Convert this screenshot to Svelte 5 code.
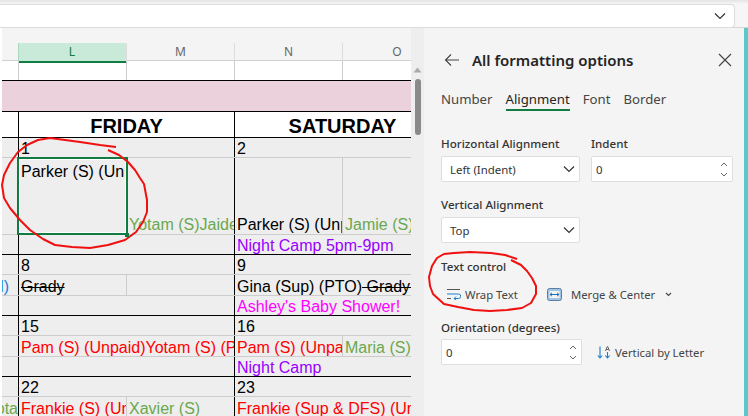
<script>
  // one entry per sheet row, cells are K L M N O (span merges)
  const rows = [
    { h: 20, line: true, cells: [{}, {}, {}, {}, {}], white: true, thin: true },
    { h: 31, line: true, pink: true, cells: [{ span: 5 }] },
    { h: 26, line: true, white: true, cells: [{}, { t: "FRIDAY", span: 2, c: "day" }, { t: "SATURDAY", span: 2, c: "day" }] },
    { h: 20, cells: [{}, { t: "1", span: 2 }, { t: "2", span: 2 }] },
    { h: 77, cells: [{}, { t: "Parker (S) (Unpaid)", c: "top sel" }, { t: "Yotam (S)Jaiden", c: "green end b" }, { t: "Parker (S) (Unpaid)", c: "end" }, { t: "Jamie (S)", c: "green end" }] },
    { h: 20, line: true, cells: [{}, { span: 2 }, { t: "Night Camp 5pm-9pm", span: 2, c: "purple" }] },
    { h: 20, cells: [{}, { t: "8", span: 2 }, { t: "9", span: 2 }] },
    { h: 21, cells: [{ t: "(Unpaid)", c: "blue flip gap" }, { t: "Grady", c: "strike" }, { c: "b" }, { t: "Gina (Sup) (PTO)", span: 2, grady: true }] },
    { h: 20, line: true, cells: [{}, { span: 2 }, { t: "Ashley's Baby Shower!", span: 2, c: "pink" }] },
    { h: 20, cells: [{}, { t: "15", span: 2 }, { t: "16", span: 2 }] },
    { h: 21, cells: [{}, { t: "Pam (S) (Unpaid)Yotam (S) (PTO)", span: 2, c: "red" }, { t: "Pam (S) (Unpaid)", c: "red" }, { t: "Maria (S)", c: "green" }] },
    { h: 20, line: true, cells: [{}, { span: 2 }, { t: "Night Camp", span: 2, c: "purple" }] },
    { h: 20, cells: [{}, { t: "22", span: 2 }, { t: "23", span: 2 }] },
    { h: 21, cells: [{ t: "Yota", c: "green flip" }, { t: "Frankie (S) (Unpaid)", c: "red" }, { t: "Xavier (S)", c: "green b" }, { t: "Frankie (Sup & DFS) (Unpaid)", span: 2, c: "red" }] }
  ];
  const cols = [
    { l: "" },
    { l: "L", on: true },
    { l: "M" },
    { l: "N" },
    { l: "O" }
  ];
  const tabs = ["Number", "Alignment", "Font", "Border"];
</script>

<div class="app">
  <div class="formula">
    <div class="fbox">
      <svg width="12" height="8" viewBox="0 0 12 8"><path d="M1 1.5 6 6.5 11 1.5" fill="none" stroke="#333" stroke-width="1.2" /></svg>
    </div>
  </div>

  <div class="main">
    <div class="sheetwrap">
      <div class="sheet">
        <div class="colhead">
          {#each cols as col}
            <div class="col" class:on={col.on}>{col.l}</div>
          {/each}
        </div>
        {#each rows as row}
          <div class="row" class:line={row.line} class:white={row.white} class:thin={row.thin} class:pinkrow={row.pink} style="height:{row.h}px">
            {#each row.cells as cell}
              <div class="cell {cell.c ?? ''}" class:s2={cell.span === 2} class:s5={cell.span === 5}>
                <span>{cell.t ?? ""}{#if cell.grady}<s>{" Grady "}</s>{/if}</span>
              </div>
            {/each}
          </div>
        {/each}
      </div>
      <div class="scroll">
        <svg width="9" height="6" viewBox="0 0 9 6"><path d="M0.5 5.5 4.5 0.5 8.5 5.5Z" fill="#aaa" /></svg>
        <div class="thumb"></div>
      </div>
    </div>

    <div class="panel">
      <div class="head">
        <svg width="16" height="14" viewBox="0 0 16 14"><path d="M15 7H1.5M7 1.5 1.5 7 7 12.5" fill="none" stroke="#444" stroke-width="1.1" /></svg>
        <h2>All formatting options</h2>
        <svg width="14" height="14" viewBox="0 0 14 14"><path d="M1 1 13 13M13 1 1 13" fill="none" stroke="#444" stroke-width="1.2" /></svg>
      </div>

      <div class="tabs">
        {#each tabs as tab}
          <div class="tab" class:active={tab === "Alignment"}>{tab}</div>
        {/each}
      </div>

      <div class="two">
        <div class="field w139">
          <label>Horizontal Alignment</label>
          <div class="box">Left (Indent)
            <svg width="12" height="8" viewBox="0 0 12 8"><path d="M1 1.5 6 6.5 11 1.5" fill="none" stroke="#333" stroke-width="1.2" /></svg>
          </div>
        </div>
        <div class="field w142">
          <label>Indent</label>
          <div class="box num">0
            <div class="spin">
              <svg width="8" height="5" viewBox="0 0 8 5"><path d="M1 4 4 1 7 4" fill="none" stroke="#666" /></svg>
              <svg width="8" height="5" viewBox="0 0 8 5"><path d="M1 1 4 4 7 1" fill="none" stroke="#666" /></svg>
            </div>
          </div>
        </div>
      </div>

      <div class="field w139 va">
        <label>Vertical Alignment</label>
        <div class="box">Top
          <svg width="12" height="8" viewBox="0 0 12 8"><path d="M1 1.5 6 6.5 11 1.5" fill="none" stroke="#333" stroke-width="1.2" /></svg>
        </div>
      </div>

      <label class="tc">Text control</label>
      <div class="actions">
        <div class="act wrap">
          <svg width="15" height="12" viewBox="0 0 15 12">
            <path d="M1 1.5H14M1 10.5H5" fill="none" stroke="#555" />
            <path d="M1 6H12.5A2 2 0 0 1 12.5 10.5H8M10 8.5 8 10.5 10 12" fill="none" stroke="#1b7fcf" />
          </svg>
          Wrap Text
        </div>
        <div class="act merge">
          <svg width="15" height="13" viewBox="0 0 15 13">
            <rect x="0.5" y="0.5" width="14" height="12" rx="2" fill="#9fc3e3" stroke="#5a7fa3" />
            <rect x="2.5" y="3" width="10" height="7" fill="#f4f4f4" />
            <path d="M3 6.5H12M5 4.8 3 6.5 5 8.2M10 4.8 12 6.5 10 8.2" fill="none" stroke="#1b6fb8" />
          </svg>
          Merge &amp; Center
          <svg class="mini" width="7" height="5" viewBox="0 0 7 5"><path d="M1 1 3.5 3.5 6 1" fill="none" stroke="#444" stroke-width="1.1" /></svg>
        </div>
      </div>

      <label class="ori">Orientation (degrees)</label>
      <div class="orirow">
        <div class="box num w142b">0
          <div class="spin">
            <svg width="8" height="5" viewBox="0 0 8 5"><path d="M1 4 4 1 7 4" fill="none" stroke="#666" /></svg>
            <svg width="8" height="5" viewBox="0 0 8 5"><path d="M1 1 4 4 7 1" fill="none" stroke="#666" /></svg>
          </div>
        </div>
        <div class="act vert">
          <svg width="14" height="13" viewBox="0 0 14 13">
            <path d="M3 0.5V12M0.8 9.5 3 12 5.2 9.5M10.5 6V12M8.3 9.5 10.5 12 12.7 9.5" fill="none" stroke="#1b7fcf" stroke-width="1.1" />
            <path d="M8.5 5 10.3 0.5H10.7L12.5 5M9.3 3.5H11.7" fill="none" stroke="#555" stroke-width="0.9" />
          </svg>
          Vertical by Letter
        </div>
      </div>
    </div>
    <div class="edge"></div>
  </div>

  <svg class="ink" width="748" height="416" viewBox="0 0 748 416">
    <path d="M116 147 100 145 80 142 65 140 50 138 38 140 27 145 18 152 10 163 4 175 2 185 4 198 10 208 20 220 30 230 43 239 55 245 72 247 90 248 108 245 125 240 136 232 143 222 147 212 147 200 144 184 140 178 135 170 128 162 119 155 108 150" fill="none" stroke="#f01010" stroke-width="2" stroke-linejoin="round" />
    <path d="M517 259 505 255 491 253 470 252 454 253 444 254 437 258 432 266 429 277 430 286 433 294 444 304 458 307 474 310 490 311 507 310 522 308 531 303 536 294 536 286 532 278 527 271 521 265 511 260" fill="none" stroke="#f01010" stroke-width="2" stroke-linejoin="round" />
  </svg>
</div>

<style>
  :global(body) {
    margin: 0;
    background: #fff;
  }
  .app {
    position: relative;
    width: 748px;
    height: 416px;
    overflow: hidden;
    display: flex;
    flex-direction: column;
    font-family: "Noto Sans", sans-serif;
  }
  .formula {
    height: 28px;
    flex: none;
    box-sizing: border-box;
    padding-top: 4px;
    padding-right: 13px;
    background: linear-gradient(#e4e4e4, #f6f6f6 4px);
    border-bottom: 1px solid #d4d4d4;
  }
  .fbox {
    height: 24px;
    box-sizing: border-box;
    background: #fff;
    border: 1px solid #dcdcdc;
    border-left: none;
    border-radius: 0 4px 4px 0;
    display: flex;
    align-items: center;
    justify-content: flex-end;
    padding-right: 8px;
  }
  .main {
    flex: 1;
    display: flex;
    min-height: 0;
  }
  .sheetwrap {
    width: 424px;
    flex: none;
    display: flex;
    padding-left: 2px;
    box-sizing: border-box;
    background: #fff;
  }
  .sheet {
    width: 409px;
    flex: none;
    overflow: hidden;
  }
  .colhead {
    height: 33px;
    box-sizing: border-box;
    background: #f4f4f4;
    border-bottom: 1px solid #d0d0d0;
    display: grid;
    grid-template-columns: 17px 108px 108px 108px 108px;
    padding-top: 15px;
  }
  .col {
    font-size: 12px;
    line-height: 18px;
    color: #666;
    text-align: center;
    border-right: 1px solid #dcdcdc;
  }
  .col:first-child {
    border-right: 1px solid transparent;
  }
  .col:last-child {
    border-right: none;
  }
  .col.on {
    background: #c9ead9;
    color: #107c41;
    border-bottom: 2px solid #107c41;
    margin-bottom: -1px;
    margin-left: -1px;
    box-shadow: inset 1px 0 0 #a9d8c0;
  }
  .row {
    box-sizing: border-box;
    display: grid;
    grid-template-columns: 17px 108px 108px 108px 108px;
    background: #eeeeee;
    border-bottom: 1px solid #cccccc;
    font-family: "Liberation Sans", sans-serif;
    font-size: 16px;
    color: #000;
  }
  .row.line {
    border-bottom: 1px solid #000;
  }
  .row.white {
    background: #fff;
  }
  .row.pinkrow {
    background: #ead1dc;
  }
  .cell {
    position: relative;
    box-sizing: border-box;
    border-right: 1px solid #cccccc;
    padding-left: 2px;
    padding-top: 3px;
    overflow: hidden;
    white-space: pre;
    line-height: 18px;
    display: flex;
    align-items: center;
  }
  .cell:first-child {
    border-right: 1px solid #000;
    padding-left: 0;
  }
  .cell.s2 {
    grid-column: span 2;
    border-right: 1px solid #000;
  }
  .cell.s5 {
    grid-column: span 5;
    border: none;
  }
  .cell.b {
    border-right-color: #000;
  }
  .thin .cell,
  .thin .cell:first-child {
    border-right-color: #cccccc;
  }
  .flip {
    justify-content: flex-end;
  }
  .gap {
    padding-right: 9px;
  }
  .flip span {
    flex: none;
  }
  .day {
    justify-content: center;
    font-weight: 700;
    font-size: 20px;
    padding-left: 0;
  }
  .top {
    align-items: flex-start;
    padding-top: 5px;
  }
  .end {
    align-items: flex-end;
  }
  .sel {
    overflow: visible;
  }
  .sel span {
    display: block;
    width: 104px;
    overflow: hidden;
  }
  .sel::after {
    content: "";
    position: absolute;
    left: -2px;
    top: -1px;
    right: -2px;
    bottom: -1px;
    border: 2px solid #107c41;
    box-shadow: inset 0 0 0 1px #fff;
  }
  .sel::before {
    content: "";
    position: absolute;
    right: -3px;
    bottom: -3px;
    width: 4px;
    height: 4px;
    background: #107c41;
    z-index: 1;
  }
  .green {
    color: #6aa84f;
  }
  .purple {
    color: #9900ff;
  }
  .pink {
    color: #ff00ff;
  }
  .red {
    color: #ff0000;
  }
  .blue {
    color: #1c7cd6;
  }
  .strike span {
    text-decoration: line-through;
  }
  .scroll {
    width: 13px;
    flex: none;
    background: #eeeeee;
    display: flex;
    flex-direction: column;
    align-items: center;
  }
  .scroll svg {
    margin-top: 39px;
  }
  .thumb {
    width: 6px;
    height: 56px;
    margin-top: 6px;
    border-radius: 3px;
    background: #8a8a8a;
  }
  .panel {
    width: 320px;
    flex: none;
    box-sizing: border-box;
    background: #f4f4f4;
    padding: 0 11px 0 17px;
    color: #333;
    font-size: 11.5px;
  }
  .head {
    display: flex;
    align-items: center;
    height: 24px;
    margin-top: 20px;
    padding-left: 3px;
    padding-right: 1px;
  }
  .head h2 {
    flex: 1;
    margin: 0 0 0 12px;
    font-size: 15px;
    font-weight: 600;
    color: #242424;
  }
  .tabs {
    display: flex;
    gap: 13px;
    margin-top: 18px;
    font-size: 13.2px;
    color: #444;
    margin-left: 0;
  }
  .tab {
    height: 21px;
    line-height: 19px;
    box-sizing: border-box;
  }
  .tab.active {
    color: #242424;
    border-bottom: 2px solid #107c41;
  }
  .two {
    display: flex;
    gap: 11px;
    margin-top: 25px;
  }
  label {
    display: block;
    font-size: 11.6px;
    font-weight: 500;
    line-height: 16px;
    color: #333;
  }
  .field label {
    margin-bottom: 4px;
  }
  .w139 {
    width: 139px;
  }
  .w142 {
    width: 142px;
  }
  .box {
    box-sizing: border-box;
    height: 26px;
    background: #fff;
    border: 1px solid #dedede;
    border-radius: 2px;
    display: flex;
    align-items: center;
    justify-content: space-between;
    padding: 0 4px 0 8px;
    font-size: 11.4px;
    color: #333;
  }
  .num {
    padding: 0 4px 0 4px;
  }
  .spin {
    display: flex;
    flex-direction: column;
    gap: 5px;
  }
  .va {
    margin-top: 15px;
  }
  .tc {
    margin-top: 16px;
  }
  .actions {
    display: flex;
    align-items: center;
    margin-top: 10px;
    height: 18px;
  }
  .act {
    display: flex;
    align-items: center;
    font-size: 11.3px;
    color: #444;
  }
  .wrap {
    width: 106px;
    padding-left: 5px;
    box-sizing: border-box;
    gap: 4px;
  }
  .merge {
    gap: 9px;
  }
  .mini {
    margin-left: 1px;
  }
  .ori {
    margin-top: 17px;
  }
  .orirow {
    display: flex;
    align-items: center;
    margin-top: 3px;
  }
  .w142b {
    width: 141px;
  }
  .vert {
    margin-left: 15px;
    gap: 4px;
  }
  .edge {
    width: 4px;
    flex: none;
    background: #5cc8c8;
  }
  .ink {
    position: absolute;
    left: 0;
    top: 0;
    pointer-events: none;
  }
</style>
